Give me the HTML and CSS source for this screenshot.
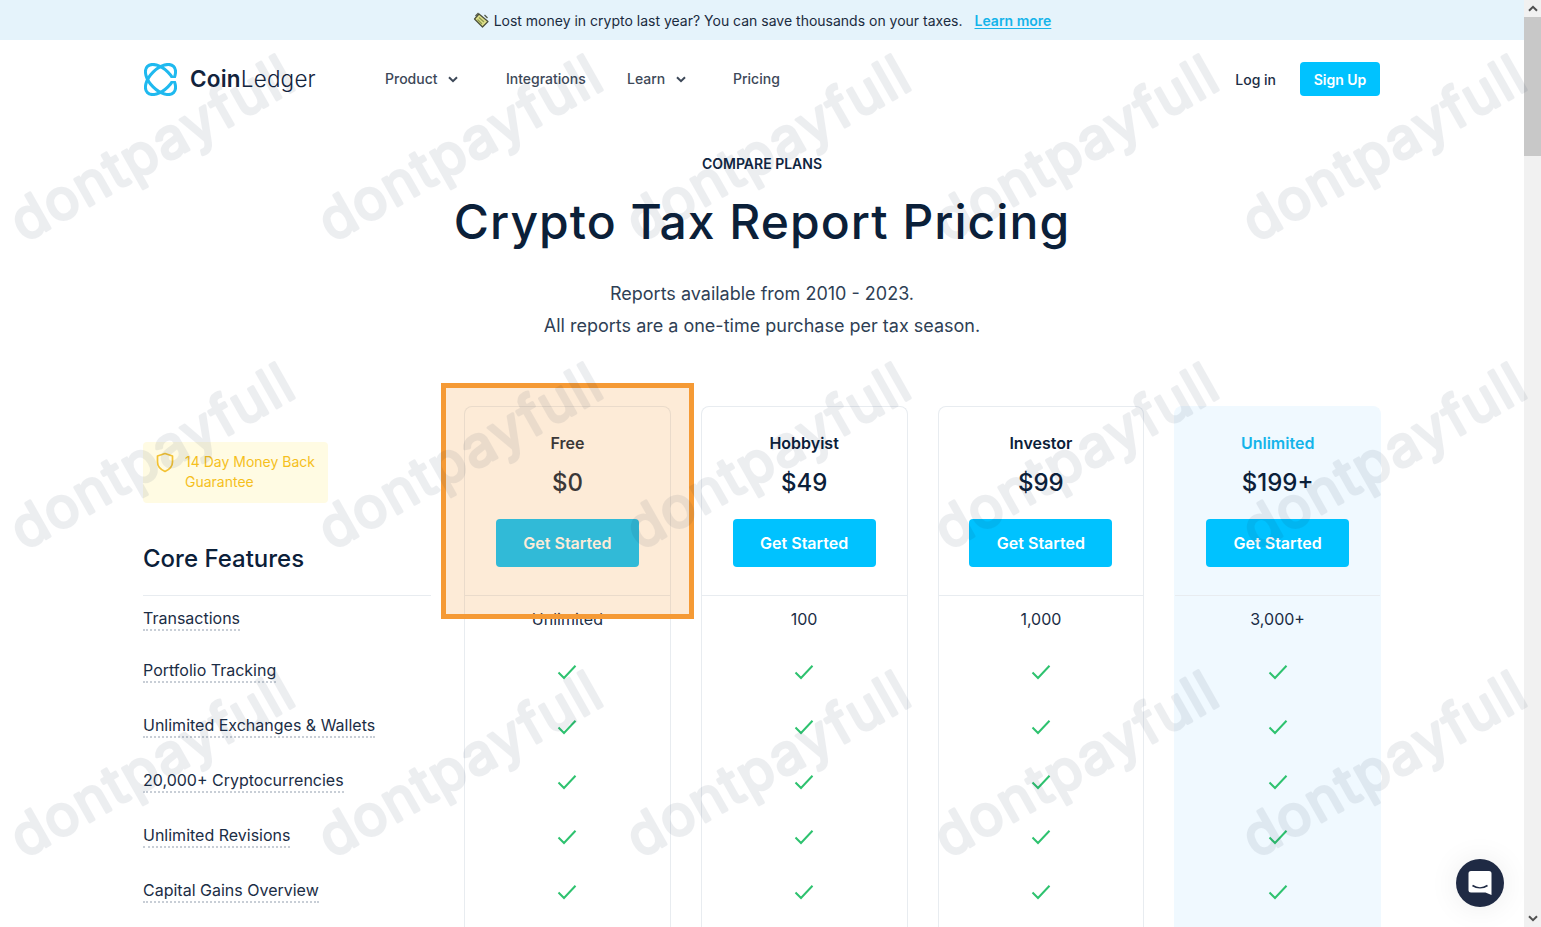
FILE: index.html
```html
<!DOCTYPE html>
<html>
<head>
    <title>Crypto Tax Report Pricing</title>
    <link rel="stylesheet" href="styles.css">
</head>
<body>
    <svg class="defs" width="0" height="0">
        <symbol id="check" viewBox="0 0 20 16">
            <path d="M1.5 8.5 L7 14 L18.5 1.8" fill="none" stroke="currentColor" stroke-width="2"/>
        </symbol>
        <symbol id="chevron" viewBox="0 0 10 7">
            <path d="M1 1.2 L5 5.2 L9 1.2" fill="none" stroke="currentColor" stroke-width="2"/>
        </symbol>
        <symbol id="mark" viewBox="0 0 308 308">
            <text x="0" y="0" transform="translate(24 243) rotate(-29.5)" textLength="315">dontpayfull</text>
        </symbol>
    </svg>

    <div class="page">
        <div class="banner">
            <svg class="banner-icon" width="16" height="16" viewBox="0 0 16 16">
                <path d="M6 2 L15 9.5 L9.5 15 L1.5 7 Z" fill="#dfe08a" stroke="#4a4f3a" stroke-width="1.2" stroke-linejoin="round"/>
                <path d="M6 5.5 L11 10 M4.5 7.5 L9 12" stroke="#8d9a4e" stroke-width="1.3"/>
                <path d="M2.5 4 L5.5 1 M11.5 3 L14.5 6" stroke="#55594a" stroke-width="1.3"/>
            </svg>
            <span>Lost money in crypto last year? You can save thousands on your taxes.</span>
            <a href="#" class="banner-link">Learn more</a>
        </div>

        <nav class="nav">
            <a href="#" class="logo">
                <svg width="33" height="33" viewBox="0 0 33 33">
                    <g fill="none" stroke="#1fb9ef" stroke-width="3">
                        <ellipse cx="16.5" cy="16.5" rx="18.5" ry="10.5" transform="rotate(45 16.5 16.5)"/>
                        <ellipse cx="16.5" cy="16.5" rx="18.5" ry="10.5" transform="rotate(-45 16.5 16.5)"/>
                    </g>
                    <path d="M25 16.5 H33" stroke="#fff" stroke-width="3"/>
                </svg>
                <span class="logo-text"><b>Coin</b>Ledger</span>
            </a>
            <div class="nav-links">
                <a href="#" class="nav-link nav-product">Product <svg class="chev" width="10" height="7"><use href="#chevron"/></svg></a>
                <a href="#" class="nav-link nav-integrations">Integrations</a>
                <a href="#" class="nav-link nav-learn">Learn <svg class="chev" width="10" height="7"><use href="#chevron"/></svg></a>
                <a href="#" class="nav-link">Pricing</a>
            </div>
            <a href="#" class="login">Log in</a>
            <a href="#" class="signup">Sign Up</a>
        </nav>

        <header class="intro">
            <div class="eyebrow">COMPARE PLANS</div>
            <h1>Crypto Tax Report Pricing</h1>
            <p>Reports available from 2010 - 2023.<br>All reports are a one-time purchase per tax season.</p>
        </header>

        <section class="pricing">
            <div class="features">
                <div class="features-head">
                    <div class="guarantee">
                        <svg width="18" height="21" viewBox="0 0 18 21">
                            <path d="M9 1.5 L16.5 4 L16.5 10 C16.5 14.5 13.5 17.5 9 19.5 C4.5 17.5 1.5 14.5 1.5 10 L1.5 4 Z" fill="none" stroke="#f3c233" stroke-width="1.7" stroke-linejoin="round"/>
                        </svg>
                        <span>14 Day Money Back Guarantee</span>
                    </div>
                    <h2>Core Features</h2>
                </div>
                <div class="row first"><span class="feature">Transactions</span></div>
                <div class="row"><span class="feature">Portfolio Tracking</span></div>
                <div class="row"><span class="feature">Unlimited Exchanges &amp; Wallets</span></div>
                <div class="row"><span class="feature">20,000+ Cryptocurrencies</span></div>
                <div class="row"><span class="feature">Unlimited Revisions</span></div>
                <div class="row"><span class="feature">Capital Gains Overview</span></div>
            </div>

            <div class="plan">
                <div class="plan-head">
                    <div class="plan-name">Free</div>
                    <div class="plan-price">$0</div>
                    <a href="#" class="plan-btn">Get Started</a>
                </div>
                <div class="row first">Unlimited</div>
                <div class="row"><svg class="tick"><use href="#check"/></svg></div>
                <div class="row"><svg class="tick"><use href="#check"/></svg></div>
                <div class="row"><svg class="tick"><use href="#check"/></svg></div>
                <div class="row"><svg class="tick"><use href="#check"/></svg></div>
                <div class="row"><svg class="tick"><use href="#check"/></svg></div>
            </div>

            <div class="plan">
                <div class="plan-head">
                    <div class="plan-name">Hobbyist</div>
                    <div class="plan-price">$49</div>
                    <a href="#" class="plan-btn">Get Started</a>
                </div>
                <div class="row first">100</div>
                <div class="row"><svg class="tick"><use href="#check"/></svg></div>
                <div class="row"><svg class="tick"><use href="#check"/></svg></div>
                <div class="row"><svg class="tick"><use href="#check"/></svg></div>
                <div class="row"><svg class="tick"><use href="#check"/></svg></div>
                <div class="row"><svg class="tick"><use href="#check"/></svg></div>
            </div>

            <div class="plan">
                <div class="plan-head">
                    <div class="plan-name">Investor</div>
                    <div class="plan-price">$99</div>
                    <a href="#" class="plan-btn">Get Started</a>
                </div>
                <div class="row first">1,000</div>
                <div class="row"><svg class="tick"><use href="#check"/></svg></div>
                <div class="row"><svg class="tick"><use href="#check"/></svg></div>
                <div class="row"><svg class="tick"><use href="#check"/></svg></div>
                <div class="row"><svg class="tick"><use href="#check"/></svg></div>
                <div class="row"><svg class="tick"><use href="#check"/></svg></div>
            </div>

            <div class="plan plan-unlimited">
                <div class="plan-head">
                    <div class="plan-name">Unlimited</div>
                    <div class="plan-price">$199+</div>
                    <a href="#" class="plan-btn">Get Started</a>
                </div>
                <div class="row first">3,000+</div>
                <div class="row"><svg class="tick"><use href="#check"/></svg></div>
                <div class="row"><svg class="tick"><use href="#check"/></svg></div>
                <div class="row"><svg class="tick"><use href="#check"/></svg></div>
                <div class="row"><svg class="tick"><use href="#check"/></svg></div>
                <div class="row"><svg class="tick"><use href="#check"/></svg></div>
            </div>
        </section>

        <div class="highlight"></div>

        <a href="#" class="chat">
            <svg width="24" height="26" viewBox="0 0 24 26">
                <path d="M3 1 H21 A2.5 2.5 0 0 1 23.5 3.5 V25 L17.5 22.5 H3 A2.5 2.5 0 0 1 0.5 20 V3.5 A2.5 2.5 0 0 1 3 1 Z" fill="#fff"/>
                <path d="M4.5 15.5 C9 18.5 15 18.5 19.5 15.5" fill="none" stroke="#1f2a44" stroke-width="1.6"/>
            </svg>
        </a>
    </div>

    <div class="scrollbar">
        <svg class="scroll-arrow" width="10" height="7"><use href="#chevron"/></svg>
        <div class="scroll-thumb"></div>
        <svg class="scroll-arrow scroll-down" width="10" height="7"><use href="#chevron"/></svg>
    </div>

    <div class="watermarks">
        <svg width="308" height="308"><use href="#mark"/></svg>
        <svg width="308" height="308"><use href="#mark"/></svg>
        <svg width="308" height="308"><use href="#mark"/></svg>
        <svg width="308" height="308"><use href="#mark"/></svg>
        <svg width="308" height="308"><use href="#mark"/></svg>
        <svg width="308" height="308"><use href="#mark"/></svg>
        <svg width="308" height="308"><use href="#mark"/></svg>
        <svg width="308" height="308"><use href="#mark"/></svg>
        <svg width="308" height="308"><use href="#mark"/></svg>
        <svg width="308" height="308"><use href="#mark"/></svg>
        <svg width="308" height="308"><use href="#mark"/></svg>
        <svg width="308" height="308"><use href="#mark"/></svg>
        <svg width="308" height="308"><use href="#mark"/></svg>
        <svg width="308" height="308"><use href="#mark"/></svg>
        <svg width="308" height="308"><use href="#mark"/></svg>
    </div>
</body>
</html>
```

FILE: styles.css
```css
* {
    box-sizing: border-box;
}
html, body {
    margin: 0;
    height: 927px;
    overflow: hidden;
}
body {
    display: flex;
    position: relative;
    font-family: Inter, "Liberation Sans", sans-serif;
    color: #0f2540;
    background-color: white;
}
a {
    color: inherit;
    text-decoration: none;
}
.defs {
    position: absolute;
}

/* page column, left of the scrollbar */
.page {
    position: relative;
    flex: 1;
    min-width: 0;
    overflow: hidden;
}
.banner {
    height: 40px;
    display: flex;
    align-items: center;
    justify-content: center;
    background-color: #e5f3fb;
    font-size: 14px;
    color: #1a2b40;
}
.banner-icon {
    margin-right: 5px;
}
.banner-link {
    margin-left: 12px;
    color: #14b4ea;
    font-weight: 600;
    text-decoration: underline;
    text-underline-offset: 2px;
}

.nav {
    height: 78px;
    padding: 0 144px;
    display: flex;
    align-items: center;
    font-size: 14px;
    font-weight: 500;
}
.logo {
    display: flex;
    align-items: center;
    gap: 13px;
    width: 241px;
}
.logo-text {
    margin-bottom: 2px;
    font-size: 22.5px;
    font-weight: 300;
    letter-spacing: 0.2px;
    color: #12233c;
}
.logo-text b {
    font-weight: 600;
}
.nav-links {
    display: flex;
    align-items: center;
    flex: 1;
    margin-bottom: 2px;
    color: #3d4858;
}
.nav-product {
    width: 121px;
}
.nav-integrations {
    width: 121px;
}
.nav-learn {
    width: 106px;
}
.chev {
    margin-left: 7px;
    vertical-align: 1px;
}
.login {
    color: #1c2d45;
}
.signup {
    margin-left: 24px;
    width: 80px;
    height: 34px;
    display: flex;
    align-items: center;
    justify-content: center;
    background-color: #00c2ff;
    border-radius: 4px;
    color: white;
    font-weight: 600;
}

.intro {
    text-align: center;
    padding-top: 37px;
}
.eyebrow {
    font-size: 14px;
    font-weight: 600;
    line-height: 17px;
    color: #0f2540;
}
h1 {
    margin: 21px 0 0;
    font-size: 48px;
    font-weight: 500;
    line-height: 58px;
    letter-spacing: 1.04px;
    color: #0b2039;
}
.intro p {
    margin: 27px 0 0;
    font-size: 18px;
    line-height: 32px;
    color: #2f3f55;
}

.pricing {
    display: grid;
    grid-template-columns: 291px repeat(4, 1fr);
    column-gap: 30px;
    margin: 64px 143px 0;
    width: 1238px;
    min-height: 600px;
}
.features-head {
    height: 190px;
    padding-top: 36px;
    margin-right: 3px;
    border-bottom: 1px solid #e8ecf0;
}
.guarantee {
    display: flex;
    align-items: flex-start;
    gap: 11px;
    width: 185px;
    height: 61px;
    padding: 10px 12px 0 13px;
    background-color: #fffbe3;
    border-radius: 4px;
    font-size: 14px;
    line-height: 20px;
    color: #f5bf1d;
}
.guarantee svg {
    flex: none;
}
h2 {
    margin: 39px 0 0;
    font-size: 24px;
    font-weight: 500;
    line-height: 34px;
    color: #0b2039;
}
.row {
    height: 55px;
    display: flex;
    align-items: center;
    font-size: 16px;
    color: #1b2d45;
}
.row.first {
    height: 48px;
    padding-bottom: 3px;
}
.features .row.first {
    padding-bottom: 1px;
}
.feature {
    padding-bottom: 1px;
    border-bottom: 2px dotted #c8ced6;
}

.plan {
    border: 1px solid #e8ecf0;
    border-bottom: none;
    border-radius: 8px 8px 0 0;
    text-align: center;
}
.plan .row {
    justify-content: center;
}
.plan-head {
    height: 189px;
    padding-top: 26px;
    border-bottom: 1px solid #e8ecf0;
}
.plan-name {
    font-size: 16px;
    font-weight: 600;
    line-height: 20px;
    color: #0b2039;
}
.plan-price {
    margin-top: 14px;
    font-size: 24px;
    font-weight: 500;
    line-height: 32px;
    color: #0b2039;
}
.plan-btn {
    display: flex;
    align-items: center;
    justify-content: center;
    width: 143px;
    height: 48px;
    margin: 20px auto 0;
    background-color: #00c2ff;
    border-radius: 4px;
    color: white;
    font-size: 16px;
    font-weight: 600;
}
.plan-unlimited {
    background-color: #f0f9ff;
    border-color: #f0f9ff;
}
.plan-unlimited .plan-name {
    color: #14b4ea;
}
.tick {
    width: 20px;
    height: 16px;
    color: #2ec26f;
}

/* annotation box drawn over the Free plan */
.highlight {
    position: absolute;
    left: 441px;
    top: 383px;
    width: 253px;
    height: 236px;
    border: 5px solid #f59a35;
    background-color: rgba(245, 154, 53, 0.2);
}

.chat {
    position: absolute;
    left: 1456px;
    top: 859px;
    width: 48px;
    height: 48px;
    display: flex;
    align-items: center;
    justify-content: center;
    border-radius: 50%;
    background-color: #1f2a44;
    box-shadow: 0 1px 30px rgba(0, 0, 0, 0.08);
}

.scrollbar {
    position: relative;
    width: 17px;
    flex: none;
    background-color: #f1f1f1;
    color: #505050;
}
.scroll-arrow {
    position: absolute;
    left: 4px;
    top: 5px;
    transform: rotate(180deg);
}
.scroll-down {
    top: auto;
    bottom: 5px;
    transform: none;
}
.scroll-thumb {
    position: absolute;
    left: 0;
    top: 17px;
    width: 17px;
    height: 139px;
    background-color: #c8c8c8;
}

/* repeating watermark, lies over everything */
.watermarks {
    position: absolute;
    left: 0;
    top: 0;
    display: grid;
    grid-template-columns: repeat(5, 308px);
    grid-auto-rows: 308px;
    pointer-events: none;
}
.watermarks svg {
    display: block;
    overflow: visible;
}
#mark text {
    font-family: Inter, sans-serif;
    font-size: 56px;
    font-weight: 400;
    fill: #14284a;
    stroke: #14284a;
    stroke-width: 3;
    stroke-linejoin: round;
    opacity: 0.075;
}
```
